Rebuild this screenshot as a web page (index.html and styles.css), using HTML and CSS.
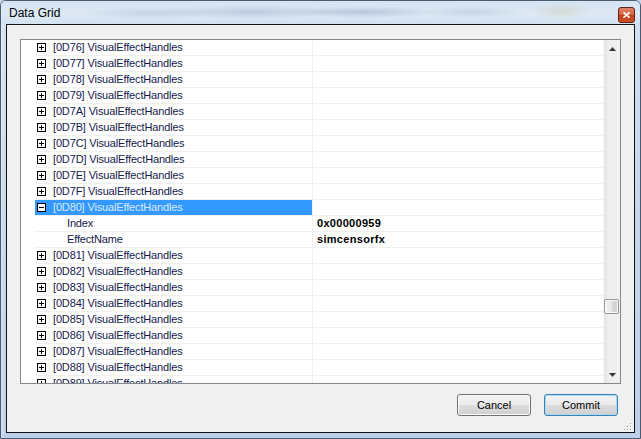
FILE: index.html
```html
<!DOCTYPE html>
<html>
<head>
<meta charset="utf-8">
<link rel="stylesheet" href="styles.css">
</head>
<body>
<div class="window">
  <div class="titlebar">
    <span class="title">Data Grid</span>
    <div class="closebtn"><svg width="7" height="6" viewBox="0 0 7 6"><path d="M1 0.8 L6 5.2 M6 0.8 L1 5.2" stroke="#ffffff" stroke-width="1.7" stroke-linecap="square"/></svg></div>
  </div>
  <div class="client">
    <div class="grid">
      <div class="rows">
        <div class="row"><span class="gutter"></span><div class="name"><svg class="exp" viewBox="0 0 9 9"><rect x="0.5" y="0.5" width="8" height="8" fill="#fff" stroke="#000"/><path d="M2 4.5 H7 M4.5 2 V7" stroke="#000"/></svg><span>[0D76] VisualEffectHandles</span></div><div class="val"></div></div>
        <div class="row"><span class="gutter"></span><div class="name"><svg class="exp" viewBox="0 0 9 9"><rect x="0.5" y="0.5" width="8" height="8" fill="#fff" stroke="#000"/><path d="M2 4.5 H7 M4.5 2 V7" stroke="#000"/></svg><span>[0D77] VisualEffectHandles</span></div><div class="val"></div></div>
        <div class="row"><span class="gutter"></span><div class="name"><svg class="exp" viewBox="0 0 9 9"><rect x="0.5" y="0.5" width="8" height="8" fill="#fff" stroke="#000"/><path d="M2 4.5 H7 M4.5 2 V7" stroke="#000"/></svg><span>[0D78] VisualEffectHandles</span></div><div class="val"></div></div>
        <div class="row"><span class="gutter"></span><div class="name"><svg class="exp" viewBox="0 0 9 9"><rect x="0.5" y="0.5" width="8" height="8" fill="#fff" stroke="#000"/><path d="M2 4.5 H7 M4.5 2 V7" stroke="#000"/></svg><span>[0D79] VisualEffectHandles</span></div><div class="val"></div></div>
        <div class="row"><span class="gutter"></span><div class="name"><svg class="exp" viewBox="0 0 9 9"><rect x="0.5" y="0.5" width="8" height="8" fill="#fff" stroke="#000"/><path d="M2 4.5 H7 M4.5 2 V7" stroke="#000"/></svg><span>[0D7A] VisualEffectHandles</span></div><div class="val"></div></div>
        <div class="row"><span class="gutter"></span><div class="name"><svg class="exp" viewBox="0 0 9 9"><rect x="0.5" y="0.5" width="8" height="8" fill="#fff" stroke="#000"/><path d="M2 4.5 H7 M4.5 2 V7" stroke="#000"/></svg><span>[0D7B] VisualEffectHandles</span></div><div class="val"></div></div>
        <div class="row"><span class="gutter"></span><div class="name"><svg class="exp" viewBox="0 0 9 9"><rect x="0.5" y="0.5" width="8" height="8" fill="#fff" stroke="#000"/><path d="M2 4.5 H7 M4.5 2 V7" stroke="#000"/></svg><span>[0D7C] VisualEffectHandles</span></div><div class="val"></div></div>
        <div class="row"><span class="gutter"></span><div class="name"><svg class="exp" viewBox="0 0 9 9"><rect x="0.5" y="0.5" width="8" height="8" fill="#fff" stroke="#000"/><path d="M2 4.5 H7 M4.5 2 V7" stroke="#000"/></svg><span>[0D7D] VisualEffectHandles</span></div><div class="val"></div></div>
        <div class="row"><span class="gutter"></span><div class="name"><svg class="exp" viewBox="0 0 9 9"><rect x="0.5" y="0.5" width="8" height="8" fill="#fff" stroke="#000"/><path d="M2 4.5 H7 M4.5 2 V7" stroke="#000"/></svg><span>[0D7E] VisualEffectHandles</span></div><div class="val"></div></div>
        <div class="row"><span class="gutter"></span><div class="name"><svg class="exp" viewBox="0 0 9 9"><rect x="0.5" y="0.5" width="8" height="8" fill="#fff" stroke="#000"/><path d="M2 4.5 H7 M4.5 2 V7" stroke="#000"/></svg><span>[0D7F] VisualEffectHandles</span></div><div class="val"></div></div>
        <div class="row"><span class="gutter"></span><div class="name selected"><svg class="exp" viewBox="0 0 9 9"><rect x="0.5" y="0.5" width="8" height="8" fill="#fff" stroke="#000"/><path d="M2 4.5 H7" stroke="#000"/></svg><span>[0D80] VisualEffectHandles</span></div><div class="val"></div></div>
        <div class="row"><span class="gutter"></span><div class="name child"><span>Index</span></div><div class="val"><b>0x00000959</b></div></div>
        <div class="row"><span class="gutter"></span><div class="name child"><span>EffectName</span></div><div class="val"><b>simcensorfx</b></div></div>
        <div class="row"><span class="gutter"></span><div class="name"><svg class="exp" viewBox="0 0 9 9"><rect x="0.5" y="0.5" width="8" height="8" fill="#fff" stroke="#000"/><path d="M2 4.5 H7 M4.5 2 V7" stroke="#000"/></svg><span>[0D81] VisualEffectHandles</span></div><div class="val"></div></div>
        <div class="row"><span class="gutter"></span><div class="name"><svg class="exp" viewBox="0 0 9 9"><rect x="0.5" y="0.5" width="8" height="8" fill="#fff" stroke="#000"/><path d="M2 4.5 H7 M4.5 2 V7" stroke="#000"/></svg><span>[0D82] VisualEffectHandles</span></div><div class="val"></div></div>
        <div class="row"><span class="gutter"></span><div class="name"><svg class="exp" viewBox="0 0 9 9"><rect x="0.5" y="0.5" width="8" height="8" fill="#fff" stroke="#000"/><path d="M2 4.5 H7 M4.5 2 V7" stroke="#000"/></svg><span>[0D83] VisualEffectHandles</span></div><div class="val"></div></div>
        <div class="row"><span class="gutter"></span><div class="name"><svg class="exp" viewBox="0 0 9 9"><rect x="0.5" y="0.5" width="8" height="8" fill="#fff" stroke="#000"/><path d="M2 4.5 H7 M4.5 2 V7" stroke="#000"/></svg><span>[0D84] VisualEffectHandles</span></div><div class="val"></div></div>
        <div class="row"><span class="gutter"></span><div class="name"><svg class="exp" viewBox="0 0 9 9"><rect x="0.5" y="0.5" width="8" height="8" fill="#fff" stroke="#000"/><path d="M2 4.5 H7 M4.5 2 V7" stroke="#000"/></svg><span>[0D85] VisualEffectHandles</span></div><div class="val"></div></div>
        <div class="row"><span class="gutter"></span><div class="name"><svg class="exp" viewBox="0 0 9 9"><rect x="0.5" y="0.5" width="8" height="8" fill="#fff" stroke="#000"/><path d="M2 4.5 H7 M4.5 2 V7" stroke="#000"/></svg><span>[0D86] VisualEffectHandles</span></div><div class="val"></div></div>
        <div class="row"><span class="gutter"></span><div class="name"><svg class="exp" viewBox="0 0 9 9"><rect x="0.5" y="0.5" width="8" height="8" fill="#fff" stroke="#000"/><path d="M2 4.5 H7 M4.5 2 V7" stroke="#000"/></svg><span>[0D87] VisualEffectHandles</span></div><div class="val"></div></div>
        <div class="row"><span class="gutter"></span><div class="name"><svg class="exp" viewBox="0 0 9 9"><rect x="0.5" y="0.5" width="8" height="8" fill="#fff" stroke="#000"/><path d="M2 4.5 H7 M4.5 2 V7" stroke="#000"/></svg><span>[0D88] VisualEffectHandles</span></div><div class="val"></div></div>
        <div class="row"><span class="gutter"></span><div class="name"><svg class="exp" viewBox="0 0 9 9"><rect x="0.5" y="0.5" width="8" height="8" fill="#fff" stroke="#000"/><path d="M2 4.5 H7 M4.5 2 V7" stroke="#000"/></svg><span>[0D89] VisualEffectHandles</span></div><div class="val"></div></div>
      </div>
      <div class="vscroll">
        <div class="sbtn"><svg width="7" height="4" viewBox="0 0 7 4"><path d="M3.5 0 L7 4 L0 4 Z" fill="#3a3a3a"/></svg></div>
        <div class="track"><div class="thumb"></div></div>
        <div class="sbtn"><svg width="7" height="4" viewBox="0 0 7 4"><path d="M0 0 L7 0 L3.5 4 Z" fill="#3a3a3a"/></svg></div>
      </div>
    </div>
    <div class="buttons">
      <button class="btn">Cancel</button>
      <button class="btn default">Commit</button>
    </div>
    <svg class="grip" width="8" height="8" viewBox="0 0 8 8">
      <rect x="6" y="0" width="1" height="1" fill="#a8a8a8"/>
      <rect x="3" y="3" width="1" height="1" fill="#a8a8a8"/>
      <rect x="6" y="3" width="1" height="1" fill="#a8a8a8"/>
      <rect x="0" y="6" width="1" height="1" fill="#a8a8a8"/>
      <rect x="3" y="6" width="1" height="1" fill="#a8a8a8"/>
      <rect x="6" y="6" width="1" height="1" fill="#a8a8a8"/>
      <rect x="7" y="1" width="1" height="1" fill="#fff"/>
      <rect x="4" y="4" width="1" height="1" fill="#fff"/>
      <rect x="7" y="4" width="1" height="1" fill="#fff"/>
      <rect x="1" y="7" width="1" height="1" fill="#fff"/>
      <rect x="4" y="7" width="1" height="1" fill="#fff"/>
      <rect x="7" y="7" width="1" height="1" fill="#fff"/>
    </svg>
  </div>
</div>
</body>
</html>
```
FILE: styles.css
```css
html, body {
  margin: 0;
  padding: 0;
  background: #c4d7ec;
}
.window {
  width: 641px;
  height: 439px;
  box-sizing: border-box;
  border: 1px solid #4b5b70;
  border-radius: 6px 6px 0 0;
  display: flex;
  flex-direction: column;
  background:
    linear-gradient(90deg, rgba(255,255,255,0.35), rgba(255,255,255,0) 4px),
    linear-gradient(180deg, #d4e2f1 0%, #c3d6eb 50%, #bcd1e9 100%);
  font-family: "Liberation Sans", Arial, sans-serif;
  overflow: hidden;
}
.titlebar {
  height: 23px;
  display: flex;
  align-items: flex-start;
  padding-left: 8px;
  background:
    radial-gradient(ellipse 70px 6px at 150px 12px, rgba(150,170,200,0.35), rgba(150,170,200,0)),
    radial-gradient(ellipse 90px 7px at 250px 11px, rgba(130,150,185,0.35), rgba(130,150,185,0)),
    radial-gradient(ellipse 80px 6px at 360px 11px, rgba(130,150,185,0.4), rgba(130,150,185,0)),
    radial-gradient(ellipse 50px 6px at 470px 11px, rgba(150,165,190,0.3), rgba(150,165,190,0)),
    radial-gradient(ellipse 30px 8px at 560px 10px, rgba(200,190,140,0.3), rgba(200,190,140,0)),
    linear-gradient(180deg, #d6e4f2 0%, #dde8f4 60%, #d2e1f0 100%);
}
.title {
  font-size: 12px;
  line-height: 14px;
  margin-top: 5px;
  color: #000;
}
.closebtn {
  margin-left: auto;
  margin-right: 5px;
  margin-top: 6px;
  width: 17px;
  height: 16px;
  box-sizing: border-box;
  border: 1px solid #5e2418;
  border-radius: 3px;
  background-color: #c8462a;
  background-image: linear-gradient(180deg, #e0836a 0%, #d3643f 48%, #c23e19 52%, #cf5226 100%);
  display: flex;
  align-items: center;
  justify-content: center;
}
.client {
  position: relative;
  margin: 0 5px 5px;
  flex: 1;
  border: 1px solid #111;
  background: #f0f0f0;
  padding: 14px 13px 0 13px;
  display: flex;
  flex-direction: column;
}
.grid {
  height: 345px;
  box-sizing: border-box;
  border: 1px solid #828790;
  background: #fff;
  display: flex;
  overflow: hidden;
}
.rows {
  flex: 1;
  overflow: hidden;
  font-size: 11px;
  letter-spacing: -0.15px;
  color: #14204a;
}
.row {
  display: flex;
  height: 16px;
}
.gutter {
  width: 14px;
  flex: none;
}
.name {
  width: 275px;
  flex: none;
  height: 15px;
  border-bottom: 1px solid #f0f0f0;
  border-right: 1px solid #f0f0f0;
  display: flex;
  align-items: center;
  padding-left: 2px;
  box-sizing: content-box;
  white-space: nowrap;
  line-height: 15px;
}
.name.child {
  padding-left: 32px;
  width: 245px;
}
.name.selected {
  background: #3399ff;
  color: #d8eaff;
}
.exp {
  width: 9px;
  height: 9px;
  flex: none;
  margin-right: 7px;
}
.val {
  flex: 1;
  height: 15px;
  border-bottom: 1px solid #f0f0f0;
  padding-left: 4px;
  line-height: 15px;
  white-space: nowrap;
  color: #000;
}
.val b {
  letter-spacing: 0.3px;
}
.vscroll {
  width: 17px;
  flex: none;
  display: flex;
  flex-direction: column;
  background: linear-gradient(90deg, #e3e3e3, #efefef 30%, #f0f0f0);
  border-left: 1px solid #f7f7f7;
  box-sizing: border-box;
}
.sbtn {
  height: 17px;
  display: flex;
  align-items: center;
  justify-content: center;
}
.track {
  flex: 1;
}
.thumb {
  margin-top: 242px;
  width: 15px;
  height: 15px;
  box-sizing: border-box;
  border: 1px solid #979797;
  border-radius: 2px;
  background: linear-gradient(90deg, #f3f3f3 0%, #e8e8e8 50%, #d9d9d9 51%, #cfcfcf 100%);
  box-shadow: inset 0 0 0 1px #fafafa;
}
.buttons {
  margin-top: 10px;
  margin-right: 3px;
  display: flex;
  justify-content: flex-end;
  gap: 13px;
}
.btn {
  width: 74px;
  height: 22px;
  box-sizing: border-box;
  border: 1px solid #707070;
  border-radius: 3px;
  background: linear-gradient(180deg, #f2f2f2 0%, #ebebeb 50%, #dddddd 51%, #cfcfcf 100%);
  box-shadow: inset 0 0 0 1px #fcfcfc;
  font-family: "Liberation Sans", Arial, sans-serif;
  font-size: 11px;
  color: #000;
  padding: 0;
  margin: 0;
}
.btn.default {
  border-color: #3c7fb1;
  box-shadow: inset 0 0 0 1px #a5dcf6;
}
.grip {
  position: absolute;
  right: 2px;
  bottom: 1px;
}
```
